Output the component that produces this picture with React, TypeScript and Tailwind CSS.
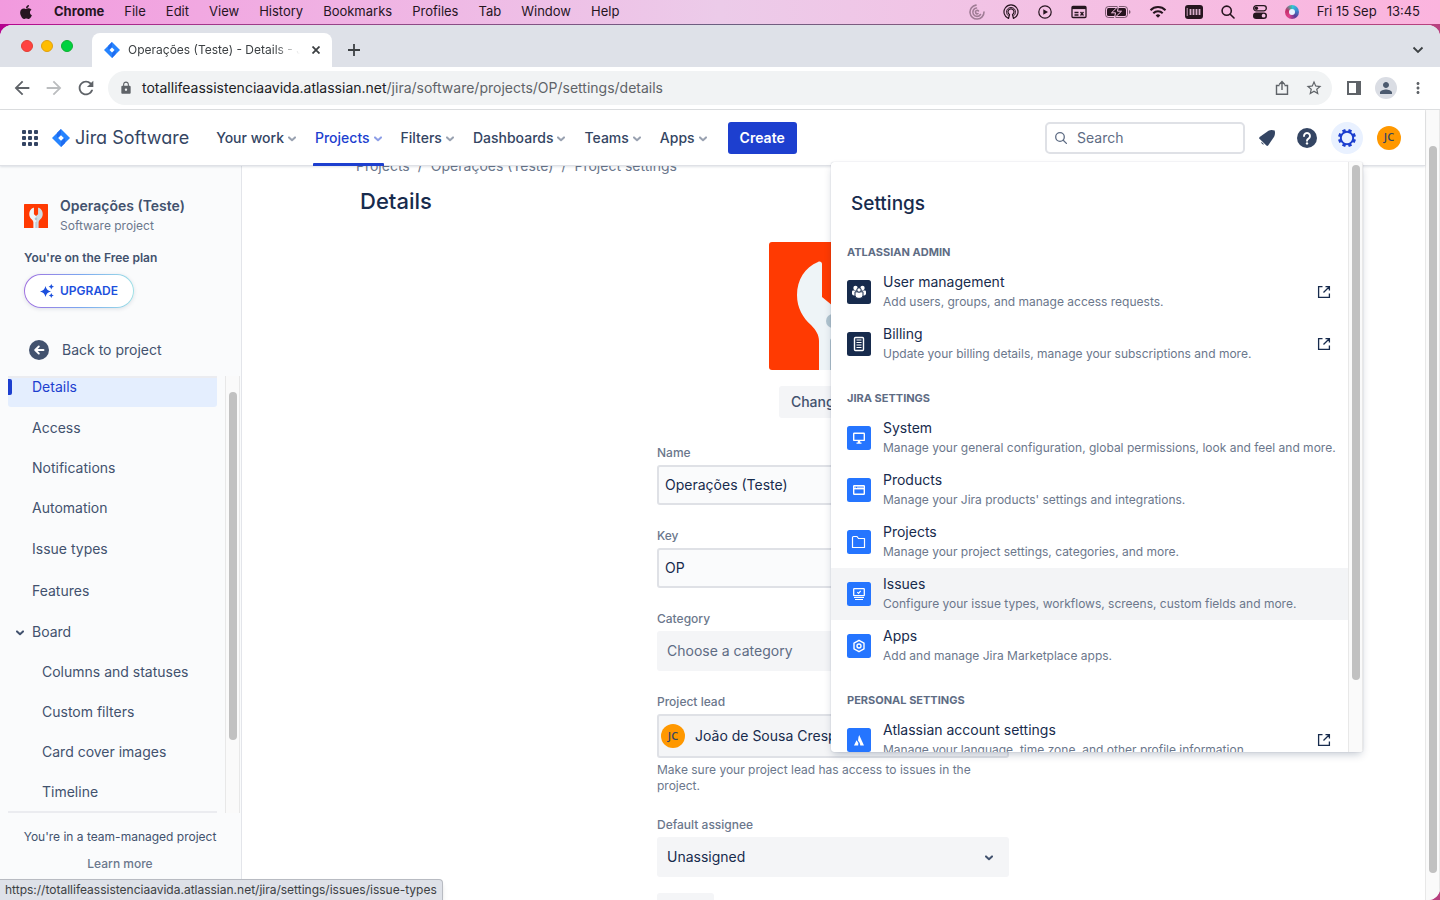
import type { ReactNode } from "react";
import { FaApple } from "react-icons/fa";
import { MdArrowBack, MdArrowForward, MdLock, MdRefresh, MdStarBorder, MdPerson, MdMoreVert } from "react-icons/md";

const menuBarItems = ["File", "Edit", "View", "History", "Bookmarks", "Profiles", "Tab", "Window", "Help"];

const navItems = ["Your work", "Projects", "Filters", "Dashboards", "Teams", "Apps"];

interface SideItem {
  label: string;
  kind?: "active" | "tall" | "group" | "child";
}

const sideItems: SideItem[] = [
  { label: "Details", kind: "active" },
  { label: "Access" },
  { label: "Notifications" },
  { label: "Automation" },
  { label: "Issue types", kind: "tall" },
  { label: "Features", kind: "tall" },
  { label: "Board", kind: "group" },
  { label: "Columns and statuses", kind: "child" },
  { label: "Custom filters", kind: "child" },
  { label: "Card cover images", kind: "child" },
  { label: "Timeline", kind: "child" },
];

function Chevron({ className }: { className?: string }) {
  return (
    <svg viewBox="0 0 8 6" className={className} fill="none" stroke="currentColor" strokeWidth="2" strokeLinecap="round" strokeLinejoin="round" aria-hidden>
      <path d="M1 1.400 4 4.200 7 1.400" />
    </svg>
  );
}

function JiraMark({ className }: { className?: string }) {
  return (
    <svg viewBox="0 0 18 18" className={className} aria-hidden>
      <path d="M9 0 18 9 9 18 0 9Z" fill="#2684ff" />
      <path d="M9 0 5.4 3.6a5 5 0 0 0 0 5.4L9 5.6Z" fill="#1f6cf0" />
      <path d="M9 18l3.6-3.6a5 5 0 0 0 0-5.4L9 12.4Z" fill="#1f6cf0" />
      <path d="M9 6.2 11.8 9 9 11.8 6.2 9Z" fill="#fff" />
    </svg>
  );
}

function Wrench({ className }: { className?: string }) {
  return (
    <svg viewBox="0 0 128 128" className={className} aria-hidden>
      <rect width="128" height="128" rx="3" fill="#ff3a02" />
      <path d="M53 22c0-2-2-3-4-2C36 25 28 38 28 53c0 13 6 23 14 30 5 5 8 10 8 16v29h14V64l-11-9Z" fill="#eef4f7" />
      <path d="M75 22c0-2 2-3 4-2 13 5 21 18 21 33 0 13-6 23-14 30-5 5-8 10-8 16v29H64V64l11-9Z" fill="#cfdbe2" />
      <circle cx="64" cy="79" r="7" fill="#b0c4cf" />
      <path d="M61 99q0-3 3-3t3 3v29h-6Z" fill="#b0c4cf" />
    </svg>
  );
}

function Avatar() {
  return (
    <span className="flex size-6 shrink-0 items-center justify-center rounded-full bg-[#ff9800] font-['Open_Sans'] text-[11px] font-semibold text-[#344563]">
      JC
    </span>
  );
}

function ScrollTrack({ children }: { children: ReactNode }) {
  return <div className="w-[15px] shrink-0 border-x border-[#e8e8e8] bg-[#fafafa] px-[3px]">{children}</div>;
}

function MenuBar() {
  return (
    <header className="flex h-6 shrink-0 items-center justify-between bg-linear-to-r from-[#f29ade] via-[#eccbe9] to-[#fbb4de] pr-5 pl-[18px] text-[13px] text-[#26151f]">
      <nav className="flex items-center gap-5">
        <FaApple className="size-4" />
        <span className="font-bold">Chrome</span>
        {menuBarItems.map((item) => (
          <span key={item}>{item}</span>
        ))}
      </nav>
      <div className="flex items-center gap-[18px]">
        <svg viewBox="0 0 16 16" className="size-4 opacity-40" fill="none" stroke="currentColor" strokeWidth="1.600" strokeLinecap="round">
          <path d="M7 1.100A7 7 0 1 0 15 8" />
          <path d="M7.500 4A4.200 4.200 0 1 0 11.500 10.500" />
          <path d="M9.500 7A1.700 1.700 0 1 0 9 9.600" />
        </svg>
        <svg viewBox="0 0 16 16" className="size-4" fill="none" stroke="currentColor" strokeWidth="1.300" strokeLinecap="round" strokeLinejoin="round">
          <path d="M5.500 14.500a7 7 0 1 1 5 0l-1-4a3 3 0 1 0-3 0Z" strokeWidth="1.200" />
          <path d="M5 11.500a4.600 4.600 0 1 1 6 0" strokeWidth=".9" />
        </svg>
        <svg viewBox="0 0 16 16" className="size-4" fill="none" stroke="currentColor" strokeWidth="1.200">
          <circle cx="8" cy="8" r="6.200" />
          <path d="M6.300 5.200v5.600L11 8Z" fill="currentColor" stroke="none" />
        </svg>
        <svg viewBox="0 0 16 14" className="h-[14px] w-4" fill="none" stroke="currentColor" strokeWidth="1.300">
          <rect x="1" y="1.500" width="14" height="11" rx="1" />
          <path d="M1 3h14" strokeWidth="2.200" />
          <path d="M3.500 7.500h4M3.500 10h4M9.500 7l3 3.500M12.500 7l-3 3.500" />
        </svg>
        <svg viewBox="0 0 26 12" className="h-3 w-[26px]">
          <rect x="0.500" y="0.500" width="22" height="11" rx="3" fill="none" stroke="currentColor" opacity=".6" />
          <rect x="2" y="2" width="19" height="8" rx="1.500" fill="currentColor" />
          <path d="M24 4v4q1.500-.5 1.500-2T24 4" fill="currentColor" opacity=".6" />
          <path d="M13.500 0 6.500 6.800h4L9.500 12l7-6.800h-4Z" fill="currentColor" stroke="#f5c3e5" strokeWidth="1" />
        </svg>
        <svg viewBox="0 0 18 14" className="h-[14px] w-[18px]" fill="none" stroke="currentColor" strokeWidth="2">
          <path d="M1.500 5.200a10.600 10.600 0 0 1 15 0" />
          <path d="M4.300 8.200a6.600 6.600 0 0 1 9.400 0" />
          <path d="M9 12.800 6.700 10.400a3.300 3.300 0 0 1 4.600 0Z" fill="currentColor" stroke="none" />
        </svg>
        <svg viewBox="0 0 18 14" className="h-[14px] w-[18px]">
          <path d="M3 0h12a3 3 0 0 1 3 3v8a3 3 0 0 1-3 3H3a3 3 0 0 1-3-3V3a3 3 0 0 1 3-3Z" fill="currentColor" />
          <path d="M2.200 3v8" stroke="#f5c3e5" strokeWidth=".8" />
          <path d="M5.500 4v6M8.500 4v6M11.500 4v6M14.500 4v6" stroke="#d8aecb" strokeWidth="1.800" />
        </svg>
        <svg viewBox="0 0 14 14" className="size-[14px]" fill="none" stroke="currentColor" strokeWidth="1.600" strokeLinecap="round">
          <circle cx="5.700" cy="5.700" r="4.600" />
          <path d="m9.200 9.200 3.800 3.800" />
        </svg>
        <svg viewBox="0 0 14 14" className="size-[14px]">
          <rect x=".7" y=".7" width="12.600" height="5.200" rx="2.600" fill="none" stroke="currentColor" strokeWidth="1.300" />
          <circle cx="3.400" cy="3.300" r="1.700" fill="currentColor" />
          <rect y="7.500" width="14" height="6.500" rx="3.200" fill="currentColor" />
          <circle cx="10.600" cy="10.700" r="1.900" fill="#f5c3e5" />
        </svg>
        <span className="flex size-[14px] items-center justify-center rounded-full bg-conic-[#35c7d8,#3b8bd0,#5b3a98,#e0408a,#c0306a,#30c9b0]">
          <span className="size-[6px] rounded-full bg-[#e8f4ff]" />
        </span>
        <span className="flex gap-[10px] whitespace-nowrap">
          <span>Fri 15 Sep</span>
          <span>13:45</span>
        </span>
      </div>
    </header>
  );
}

function TabStrip() {
  return (
    <div className="flex h-[42px] items-end bg-[#dee1e8] pr-4 pl-[21px]">
      <div className="flex h-full items-center gap-2 pr-[19px]">
        <span className="size-3 rounded-full border border-[#e33e32] bg-[#ff4240]" />
        <span className="size-3 rounded-full border border-[#e0a010] bg-[#ffbd00]" />
        <span className="size-3 rounded-full border border-[#10b030] bg-[#00d240]" />
      </div>
      <div className="flex h-[34px] w-60 items-center rounded-t-lg bg-white px-3 text-[12px] text-[#3c4043]">
        <JiraMark className="size-4 shrink-0" />
        <span className="ml-2 flex-1 overflow-hidden whitespace-nowrap [mask-image:linear-gradient(to_right,black_85%,transparent)]">
          Operações (Teste) - Details - Jira
        </span>
        <button type="button" aria-label="Close tab" className="ml-3 flex size-2 items-center">
          <svg viewBox="0 0 8 8" className="size-2" stroke="currentColor" strokeWidth="1.800">
            <path d="m.5.5 7 7m0-7-7 7" />
          </svg>
        </button>
      </div>
      <button type="button" aria-label="New tab" className="flex h-[34px] items-center pl-4 text-[#3c4043]">
        <svg viewBox="0 0 12 12" className="size-3" stroke="currentColor" strokeWidth="1.800">
          <path d="M6 0v12M0 6h12" />
        </svg>
      </button>
      <button type="button" aria-label="Search tabs" className="ml-auto flex h-[34px] items-center text-[#3c4043]">
        <svg viewBox="0 0 12 8" className="h-2 w-3" fill="none" stroke="currentColor" strokeWidth="1.800">
          <path d="m1.500 1.500 4.500 4.500 4.500-4.500" />
        </svg>
      </button>
    </div>
  );
}

function Toolbar() {
  return (
    <div className="flex h-[43px] items-center border-b border-[#dcdee0] bg-white pr-[13px] pl-[11px] text-[#5f6368]">
      <div className="flex items-center gap-[10px]">
        <button type="button" aria-label="Back">
          <MdArrowBack className="size-[22px]" />
        </button>
        <button type="button" aria-label="Forward" className="text-[#bbbdbf]">
          <MdArrowForward className="size-[22px]" />
        </button>
        <button type="button" aria-label="Reload">
          <MdRefresh className="size-[22px]" />
        </button>
      </div>
      <div className="ml-[11px] flex h-[34px] flex-1 items-center rounded-full bg-[#f1f3f4] pr-[9px] pl-[11px]">
        <MdLock className="size-[14px]" />
        <span className="ml-[9px] pb-[2px] text-[14px] whitespace-nowrap">
          <span className="text-[#202124]">totallifeassistenciaavida.atlassian.net</span>/jira/software/projects/OP/settings/details
        </span>
        <button type="button" aria-label="Share" className="ml-auto">
          <svg viewBox="0 0 16 16" className="size-4" fill="none" stroke="currentColor" strokeWidth="1.400">
            <path d="M5.500 5.500h-3v8.800h11V5.500h-3M8 10V1.800M5.200 4.400 8 1.600l2.800 2.800" />
          </svg>
        </button>
        <button type="button" aria-label="Bookmark" className="ml-[15px]">
          <MdStarBorder className="size-[18px]" />
        </button>
      </div>
      <svg viewBox="0 0 14 14" className="ml-[15px] size-[14px]">
        <path d="M0 0h14v14H0Zm2 2v10h7V2Z" fill="currentColor" fillRule="evenodd" />
      </svg>
      <span className="ml-[14px] flex size-[22px] items-center justify-center rounded-full bg-[#dadde4] text-[#4c5a6f]">
        <MdPerson className="size-[18px]" />
      </span>
      <button type="button" aria-label="Chrome menu" className="ml-3">
        <MdMoreVert className="size-[18px]" />
      </button>
    </div>
  );
}

function JiraHeader() {
  return (
    <header className="relative z-20 flex h-14 shrink-0 items-center border-b border-[#dfe1e6] bg-white pr-6 pl-[22px] text-[#344563] shadow-[0_1px_2px_rgba(9,30,66,0.12)]">
      <button type="button" aria-label="Switch to" className="grid size-4 grid-cols-3 gap-[2px]">
        {Array.from({ length: 9 }, (_, i) => (
          <span key={i} className="size-1 rounded-[1px] bg-current" />
        ))}
      </button>
      <a href="#" className="ml-[14px] flex items-center gap-[5px]">
        <JiraMark className="size-[18px]" />
        <span className="text-[18px] whitespace-nowrap [font-feature-settings:'cv11']">Jira Software</span>
      </a>
      <nav className="ml-[27px] flex h-full gap-[19px] text-[14px] font-medium">
        {navItems.map((item) =>
          item === "Projects" ? (
            <button key={item} type="button" className="relative flex items-center gap-1 whitespace-nowrap text-[#1d3fcf]">
              {item}
              <Chevron className="mt-[2px] h-[6px] w-2 opacity-50" />
              <span className="absolute -inset-x-[2px] -bottom-px h-[3px] rounded-t-[1px] bg-[#1d3fcf]" />
            </button>
          ) : (
            <button key={item} type="button" className="flex items-center gap-1 whitespace-nowrap">
              {item}
              <Chevron className="mt-[2px] h-[6px] w-2 opacity-50" />
            </button>
          ),
        )}
      </nav>
      <button type="button" className="ml-[21px] h-8 rounded-[3px] bg-[#1d3fcf] px-3 text-[14px] font-semibold text-white">
        Create
      </button>
      <label className="ml-auto flex h-8 w-[200px] items-center gap-[10px] rounded-[5px] border-2 border-[#dfe1e6] px-2 text-[#5e6c84]">
        <svg viewBox="0 0 12 12" className="size-3 shrink-0" fill="none" stroke="currentColor" strokeWidth="1.300" strokeLinecap="round">
          <circle cx="5" cy="5" r="4.300" />
          <path d="m8.200 8.200 3.200 3.200" />
        </svg>
        <input type="search" aria-label="Search" placeholder="Search" className="w-full bg-transparent text-[14px] outline-none placeholder:text-[#5e6c84]" />
      </label>
      <button type="button" aria-label="Notifications" className="ml-[10px] flex size-6 items-center justify-center">
        <svg viewBox="0 0 24 24" className="size-6" fill="currentColor">
          <path d="M4.200 12.600a1.200 1.200 0 0 1 .3-1.300l1.200-1L13.500 4.700c1.700-1 3.900-1 6.200-.3.500 2.300.4 4.600-.6 6.300L14 18.300l-.9 1.100a1.200 1.200 0 0 1-1.700.1Z" />
          <path d="M6.300 15.700a2.200 2.200 0 0 0 2.700 2.600Z" />
        </svg>
      </button>
      <button type="button" aria-label="Help" className="ml-[18px] flex size-5 items-center justify-center">
        <svg viewBox="0 0 20 20" className="size-5">
          <circle cx="10" cy="10" r="10" fill="currentColor" />
          <path d="M7 8a3 3 0 1 1 4.500 2.600c-1 .6-1.500 1-1.500 2.200" fill="none" stroke="#fff" strokeWidth="1.900" strokeLinecap="round" />
          <circle cx="10" cy="15.400" r="1.200" fill="#fff" />
        </svg>
      </button>
      <button type="button" aria-label="Settings" className="ml-[14px] flex size-8 items-center justify-center rounded-full bg-[#e9f1ff] text-[#1d3fcf]">
        <svg viewBox="0 0 20 20" className="size-5" fill="none" stroke="currentColor">
          <circle cx="10" cy="10" r="6.200" strokeWidth="2" />
          <g strokeWidth="3.400">
            <path d="M10 4V1M10 16v3M4 10H1M16 10h3" transform="rotate(22.500 10 10)" />
            <path d="M10 4V1M10 16v3M4 10H1M16 10h3" transform="rotate(67.500 10 10)" />
          </g>
        </svg>
      </button>
      <button type="button" aria-label="Your profile" className="ml-[14px]">
        <Avatar />
      </button>
      <SettingsMenu />
    </header>
  );
}

interface SettingsEntry {
  title: string;
  description: string;
  icon: ReactNode;
  external?: boolean;
  dark?: boolean;
  hovered?: boolean;
}

const adminEntries: SettingsEntry[] = [
  {
    title: "User management",
    description: "Add users, groups, and manage access requests.",
    external: true,
    dark: true,
    icon: (
      <>
        <circle cx="8.500" cy="8" r="2.200" fill="#fff" />
        <circle cx="15.500" cy="8" r="2.200" fill="#fff" />
        <path d="M5 11.500q0-1 1-1h12q1 0 1 1v2q0 2-2 2H7q-2 0-2-2Z" fill="#fff" />
        <g fill="#fff" stroke="#172b4d">
          <path d="M8 11.800h8v3.500a3 3 0 0 1-3 3h-2a3 3 0 0 1-3-3Z" />
          <circle cx="12" cy="10" r="2.200" />
        </g>
      </>
    ),
  },
  {
    title: "Billing",
    description: "Update your billing details, manage your subscriptions and more.",
    external: true,
    dark: true,
    icon: (
      <>
        <rect x="7.500" y="5.500" width="9" height="13" rx="1" stroke="#fff" strokeWidth="1.400" fill="none" />
        <path d="M9.500 8h5M9.500 10.500h5M9.500 13h5M9.500 15.500h5" stroke="#fff" strokeWidth="1.200" />
      </>
    ),
  },
];

const jiraEntries: SettingsEntry[] = [
  {
    title: "System",
    description: "Manage your general configuration, global permissions, look and feel and more.",
    icon: (
      <>
        <rect x="6.700" y="7.200" width="10.600" height="7.200" rx=".5" stroke="#fff" strokeWidth="1.400" fill="none" />
        <path d="M10.800 14.500h2.400v2h1.300v1.300h-5v-1.300h1.300Z" fill="#fff" />
      </>
    ),
  },
  {
    title: "Products",
    description: "Manage your Jira products' settings and integrations.",
    icon: (
      <>
        <rect x="6.700" y="7.700" width="10.600" height="8.600" rx=".5" stroke="#fff" strokeWidth="1.400" fill="none" />
        <path d="M6.500 10.700h11" stroke="#fff" strokeWidth="1.400" />
        <path d="M7.500 9.200h1.500M10 9.200h6.500" stroke="#fff" strokeWidth=".7" />
      </>
    ),
  },
  {
    title: "Projects",
    description: "Manage your project settings, categories, and more.",
    icon: <path d="M6.500 6.500h3.500l1.500 2h6v9h-12v-10q0-1 1-1Z" stroke="#fff" strokeWidth="1.200" fill="none" strokeLinejoin="round" />,
  },
  {
    title: "Issues",
    description: "Configure your issue types, workflows, screens, custom fields and more.",
    hovered: true,
    icon: (
      <>
        <rect x="6.700" y="6.700" width="10.600" height="7" rx=".5" stroke="#fff" strokeWidth="1.300" fill="none" />
        <path d="m10.300 10.200 1.200 1.200 2.200-2.600" stroke="#fff" strokeWidth="1.200" fill="none" />
        <path d="M7 15.500h10M8 17.500h8" stroke="#fff" strokeWidth="1.200" />
      </>
    ),
  },
  {
    title: "Apps",
    description: "Add and manage Jira Marketplace apps.",
    icon: (
      <>
        <path d="m12 6.300 5 2.800v5.800l-5 2.800-5-2.800V9.100Z" stroke="#fff" strokeWidth="1.400" fill="none" strokeLinejoin="round" />
        <circle cx="12" cy="12" r="2" stroke="#fff" strokeWidth="1.400" fill="none" />
      </>
    ),
  },
];

const personalEntries: SettingsEntry[] = [
  {
    title: "Atlassian account settings",
    description: "Manage your language, time zone, and other profile information.",
    external: true,
    icon: <path d="M12.200 7 17 17.500h-3.700q-.2-3-2.300-5 .1-3.300 1.200-5.500ZM9.500 12.200q2.500 2.300 1.700 5.300H7Z" fill="#fff" />,
  },
];

function SettingsRow({ title, description, icon, external, dark, hovered }: SettingsEntry) {
  return (
    <a href="#" className={hovered ? "flex h-[52px] items-center bg-[#f3f4f6] px-4" : "flex h-[52px] items-center px-4"}>
      <svg viewBox="0 0 24 24" className="size-6 shrink-0" aria-hidden>
        <rect width="24" height="24" rx="2.500" fill={dark ? "#172b4d" : "#2575ff"} />
        {icon}
      </svg>
      <span className="ml-3 flex-1 pb-[2px] whitespace-nowrap">
        <span className="block text-[14px] leading-5 text-[#172b4d]">{title}</span>
        <span className="block pt-[2px] text-[12px] leading-4 text-[#6b778c]">{description}</span>
      </span>
      {external && (
        <svg viewBox="0 0 14 14" className="mr-px size-[14px] shrink-0 text-[#172b4d]" fill="none" stroke="currentColor" strokeWidth="1.300">
          <path d="M5.500 1.600H1.600v10.800h10.800V8.500M8.500 1.600h3.900v3.900M12.300 1.700 6.500 7.500" />
        </svg>
      )}
    </a>
  );
}

function SettingsSection({ heading, entries }: { heading: string; entries: SettingsEntry[] }) {
  return (
    <section className="pt-5">
      <h3 className="px-4 pb-[6px] text-[11px] leading-4 font-bold text-[#5e6c84]">{heading}</h3>
      {entries.map((entry) => (
        <SettingsRow key={entry.title} {...entry} />
      ))}
    </section>
  );
}

function SettingsMenu() {
  return (
    <div className="absolute top-[52px] right-[62px] flex h-[590px] w-[532px] overflow-hidden rounded-[3px] bg-white shadow-[0_4px_8px_-2px_rgba(9,30,66,0.25),0_0_1px_rgba(9,30,66,0.31)]">
      <div className="min-w-0 flex-1 overflow-hidden pt-[30px]">
        <h2 className="px-5 pb-2 text-[19px] leading-6 font-medium text-[#172b4d]">Settings</h2>
        <SettingsSection heading="ATLASSIAN ADMIN" entries={adminEntries} />
        <SettingsSection heading="JIRA SETTINGS" entries={jiraEntries} />
        <SettingsSection heading="PERSONAL SETTINGS" entries={personalEntries} />
      </div>
      <ScrollTrack>
        <div className="mt-[3px] h-[515px] w-2 rounded-full bg-[#c1c1c1]" />
      </ScrollTrack>
    </div>
  );
}

function SideLink({ label, kind }: SideItem) {
  if (kind === "active") {
    return (
      <a href="#" className="-mt-3 flex h-[41px] items-center rounded-[3px] bg-[#e4eefe] text-[#1d3fcf]">
        <span className="h-4 w-1 rounded-r-[2px] bg-[#1d3fcf]" />
        <span className="ml-5">{label}</span>
      </a>
    );
  }

  if (kind === "group") {
    return (
      <a href="#" className="flex h-10 items-center pl-2">
        <Chevron className="mt-1 h-[6px] w-2" />
        <span className="ml-2">{label}</span>
      </a>
    );
  }

  if (kind === "child") {
    return (
      <a href="#" className="flex h-10 items-center pl-[34px]">
        {label}
      </a>
    );
  }

  return (
    <a href="#" className={kind === "tall" ? "flex h-[42px] items-center pl-6" : "flex h-10 items-center pl-6"}>
      {label}
    </a>
  );
}

function Sidebar() {
  return (
    <aside className="flex w-[241px] shrink-0 flex-col bg-[#fafbfc] pr-px text-[#42526e]">
      <div className="flex items-center gap-3 px-6 pt-[30px]">
        <Wrench className="size-6" />
        <div>
          <div className="text-[14px] leading-5 font-semibold">Operações (Teste)</div>
          <div className="text-[12px] leading-5 text-[#6b778c]">Software project</div>
        </div>
      </div>
      <div className="px-6 pt-[14px]">
        <p className="text-[12px] leading-4 font-semibold">You're on the Free plan</p>
        <button
          type="button"
          className="mt-2 rounded-full bg-linear-to-r from-[#9f6fe0] via-[#7ba5f0] to-[#9fe0e5] p-px shadow-[0_1px_4px_rgba(9,30,66,0.12)]"
        >
          <span className="flex h-8 items-center gap-[6px] rounded-full bg-white px-[15px] text-[12px] font-semibold text-[#1d50dd]">
            <svg viewBox="0 0 14 14" className="size-[14px]" fill="currentColor">
              <path d="M5.500 2q.9 4.600 5.500 5.500-4.600.9-5.500 5.500Q4.600 8.400 0 7.500 4.600 6.600 5.500 2ZM11.300 0q.4 2.300 2.700 2.700-2.300.4-2.700 2.700-.4-2.300-2.700-2.700Q10.900 2.300 11.300 0ZM11.300 9q.4 2.100 2.500 2.500-2.100.4-2.500 2.500-.4-2.100-2.500-2.500 2.100-.4 2.500-2.500Z" />
            </svg>
            UPGRADE
          </span>
        </button>
      </div>
      <a href="#" className="mt-8 flex h-5 items-center gap-[13px] px-[29px] text-[14px]">
        <svg viewBox="0 0 20 20" className="size-5">
          <circle cx="10" cy="10" r="10" fill="#42526e" />
          <path d="M14.500 10h-8m3.300-3.500L6.200 10l3.600 3.500" fill="none" stroke="#fff" strokeWidth="1.900" strokeLinecap="round" strokeLinejoin="round" />
        </svg>
        <span className="pb-[2px]">Back to project</span>
      </a>
      <div className="mt-4 flex min-h-0 flex-1">
        <nav className="mr-2 ml-2 min-w-0 flex-1 overflow-hidden border-y-2 border-[#ebecf0] text-[14px]">
          {sideItems.map((item) => (
            <SideLink key={item.label} {...item} />
          ))}
        </nav>
        <ScrollTrack>
          <div className="mt-4 h-[348px] w-2 rounded-full bg-[#c1c1c1]" />
        </ScrollTrack>
      </div>
      <div className="flex h-[87px] shrink-0 flex-col items-center pt-[14px] text-[12px] leading-5">
        <p className="whitespace-nowrap">You're in a team-managed project</p>
        <a href="#" className="mt-[7px] font-medium text-[#6b778c]">
          Learn more
        </a>
      </div>
    </aside>
  );
}

const labelClass = "mt-[23px] mb-1 block text-[12px] leading-4 font-medium text-[#6b778c]";

function DetailsForm() {
  return (
    <main className="min-w-0 flex-1 overflow-hidden border-l border-[#e3e5ea] bg-white pr-px">
      <div className="mx-auto -mt-[10px] w-full max-w-[954px]">
        <div className="flex gap-2 text-[14px] leading-5 whitespace-nowrap text-[#6b778c]">
          <a href="#">Projects</a>
          <span>/</span>
          <a href="#">Operações (Teste)</a>
          <span>/</span>
          <a href="#">Project settings</a>
        </div>
        <h1 className="mt-[11px] pl-1 text-[22px] leading-7 font-medium text-[#172b4d]">Details</h1>
        <form className="mx-auto mt-[27px] w-[352px] text-[14px] text-[#172b4d]">
          <Wrench className="mx-auto size-32" />
          <button type="button" className="mx-auto mt-4 mb-[27px] block h-8 rounded-[3px] bg-[#f4f5f7] px-3 pb-[2px] font-medium text-[#42526e]">
            Change icon
          </button>
          <label htmlFor="name" className={labelClass}>
            Name
          </label>
          <input id="name" defaultValue="Operações (Teste)" className="h-10 w-full rounded-[3px] border-2 border-[#dfe1e6] bg-[#fafbfc] px-[6px] pb-[2px]" />
          <label htmlFor="key" className={labelClass}>
            Key
          </label>
          <input id="key" defaultValue="OP" className="h-10 w-full rounded-[3px] border-2 border-[#dfe1e6] bg-[#fafbfc] px-[6px] pb-[2px]" />
          <label htmlFor="category" className={labelClass}>
            Category
          </label>
          <select id="category" className="block h-10 w-full appearance-none rounded-[3px] bg-[#f4f5f7] px-[10px] pb-[2px] text-[#5e6c84]">
            <option>Choose a category</option>
          </select>
          <label htmlFor="lead" className={labelClass}>
            Project lead
          </label>
          <div className="flex h-11 items-center gap-[10px] rounded-[3px] border-2 border-[#dfe1e6] bg-[#f4f5f7] px-[2px]">
            <Avatar />
            <select id="lead" className="h-full min-w-0 flex-1 appearance-none bg-transparent pb-[2px]">
              <option>João de Sousa Crespo</option>
            </select>
          </div>
          <p className="mt-1 text-[12px] leading-4 text-[#6b778c]">
            Make sure your project lead has access to issues in the project.
          </p>
          <label htmlFor="assignee" className={labelClass}>
            Default assignee
          </label>
          <div className="relative">
            <select id="assignee" className="block h-10 w-full appearance-none rounded-[3px] bg-[#f4f5f7] px-[10px] pb-[2px]">
              <option>Unassigned</option>
            </select>
            <Chevron className="pointer-events-none absolute top-[18px] right-4 h-[6px] w-2 text-[#42526e]" />
          </div>
          <button type="button" className="mt-4 h-8 rounded-[3px] bg-[#f4f5f7] px-3 font-medium text-[#a5adba]">
            Save
          </button>
        </form>
      </div>
    </main>
  );
}

export default function App() {
  return (
    <div className="relative flex h-screen flex-col overflow-hidden bg-linear-to-r from-[#b5008f] via-[#6b5f80] to-[#b8407f] font-['Inter',sans-serif]">
      <MenuBar />
      <div className="mt-px flex min-h-0 flex-1 flex-col overflow-hidden rounded-xl bg-white">
        <TabStrip />
        <Toolbar />
        <div className="flex min-h-0 flex-1">
          <div className="flex min-w-0 flex-1 flex-col">
            <JiraHeader />
            <div className="flex min-h-0 flex-1">
              <Sidebar />
              <DetailsForm />
            </div>
          </div>
          <ScrollTrack>
            <div className="mt-9 h-[727px] w-2 rounded-full bg-[#c1c1c1]" />
          </ScrollTrack>
        </div>
      </div>
      <div className="absolute bottom-0 left-0 z-30 h-[21px] rounded-tr-[4px] border-t border-r border-[#b8bbc2] bg-[#dee1e8] px-[5px] text-[12px] leading-5 whitespace-nowrap text-[#3c4043] shadow-md">
        https://totallifeassistenciaavida.atlassian.net/jira/settings/issues/issue-types
      </div>
    </div>
  );
}
